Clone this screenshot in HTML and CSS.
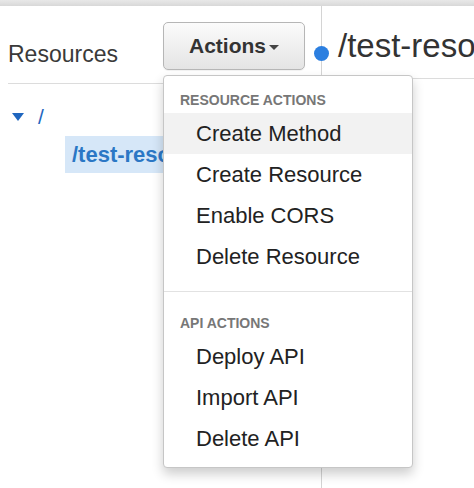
FILE: index.html
```html
<!DOCTYPE html>
<html lang="en">
<head>
    <meta charset="UTF-8">
    <meta name="viewport" content="width=device-width, initial-scale=1.0">
    <title>Resources</title>
    <link rel="stylesheet" href="styles.css">
</head>
<body>

<div class="topbar"></div>

<div class="layout">
    <div class="sidebar">
        <div class="sidebar-head">
            <span class="title">Resources</span>
            <button type="button" class="btn-actions">Actions<span class="caret"></span></button>
        </div>

        <div class="tree">
            <div class="tree-root">
                <span class="tree-toggle"></span>
                <span class="tree-path">/</span>
            </div>
            <div class="tree-child">/test-resource</div>
        </div>

        <div class="menu">
            <div class="menu-header">RESOURCE ACTIONS</div>
            <div class="menu-item active">Create Method</div>
            <div class="menu-item">Create Resource</div>
            <div class="menu-item">Enable CORS</div>
            <div class="menu-item">Delete Resource</div>
            <div class="menu-divider"></div>
            <div class="menu-header">API ACTIONS</div>
            <div class="menu-item">Deploy API</div>
            <div class="menu-item">Import API</div>
            <div class="menu-item">Delete API</div>
        </div>
    </div>

    <div class="content">
        <div class="content-head">
            <span class="dot"></span>
            <h1 class="resource-title">/test-resource</h1>
        </div>
    </div>
</div>

</body>
</html>
```

FILE: styles.css
```css
html, body {
    overflow: hidden;
}
body {
    font-family: "Liberation Sans", Arial, sans-serif;
    background-color: #fff;
    margin: 0;
    width: 474px;
    height: 488px;
}
.topbar {
    height: 6px;
    background: linear-gradient(#e8e8e8, #d8d8d8);
}
.layout {
    display: flex;
    height: 482px;
}
.sidebar {
    position: relative;
    width: 322px;
    flex-shrink: 0;
    box-sizing: border-box;
    border-right: 1px solid #d4d4d4;
}
.sidebar-head {
    margin-left: 8px;
    height: 77px;
    padding-right: 16px;
    border-bottom: 1px solid #dcdcdc;
    display: flex;
    justify-content: space-between;
    align-items: flex-start;
}
.title {
    margin-top: 35px;
    font-size: 23px;
    line-height: 26px;
    color: #3a3a3a;
}
.btn-actions {
    margin-top: 16px;
    width: 142px;
    height: 48px;
    box-sizing: border-box;
    border: 1px solid #b6b6b6;
    border-radius: 5px;
    background: linear-gradient(#fbfbfb, #e4e4e4);
    box-shadow: 0 1px 1px rgba(0, 0, 0, 0.06);
    font-family: inherit;
    font-size: 21px;
    font-weight: bold;
    color: #333;
    padding: 0;
    cursor: pointer;
}
.caret {
    display: inline-block;
    margin-left: 3px;
    vertical-align: middle;
    border-left: 5.5px solid transparent;
    border-right: 5.5px solid transparent;
    border-top: 5px solid #444;
}
.tree {
    padding-top: 20px;
}
.tree-root {
    display: flex;
    align-items: center;
    padding-left: 12px;
    height: 26px;
}
.tree-toggle {
    border-left: 6.5px solid transparent;
    border-right: 6.5px solid transparent;
    border-top: 8px solid #1f66bf;
}
.tree-path {
    margin-left: 14px;
    font-size: 21px;
    color: #1f66bf;
}
.tree-child {
    display: inline-block;
    margin-top: 6px;
    margin-left: 65px;
    padding: 0 7px;
    height: 37px;
    line-height: 37px;
    background-color: #d6e7f8;
    color: #2b77c5;
    font-size: 22px;
    font-weight: bold;
}
.menu {
    position: absolute;
    left: 163px;
    top: 69px;
    width: 250px;
    box-sizing: border-box;
    padding-bottom: 8px;
    background-color: #fff;
    border: 1px solid #c6c6c6;
    border-radius: 4px;
    box-shadow: 0 6px 12px rgba(0, 0, 0, 0.2);
    z-index: 10;
}
.menu-header {
    padding: 15px 16px 4px;
    font-size: 14px;
    line-height: 18px;
    font-weight: bold;
    color: #777;
}
.menu-item {
    height: 41px;
    line-height: 41px;
    padding-left: 32px;
    font-size: 22px;
    color: #222;
}
.menu-item.active {
    background-color: #f2f2f2;
}
.menu-divider {
    height: 1px;
    background-color: #e2e2e2;
    margin: 14px 0 7px;
}
.content {
    flex: 1;
    min-width: 0;
}
.content-head {
    position: relative;
    height: 72px;
    border-bottom: 1px solid #dcdcdc;
}
.dot {
    position: absolute;
    left: -8px;
    top: 40px;
    width: 15px;
    height: 15px;
    border-radius: 50%;
    background-color: #2c7fe0;
}
.resource-title {
    margin: 0;
    padding-top: 20px;
    padding-left: 16px;
    font-size: 33px;
    line-height: 40px;
    font-weight: normal;
    color: #333;
    white-space: nowrap;
    overflow: hidden;
}
```
